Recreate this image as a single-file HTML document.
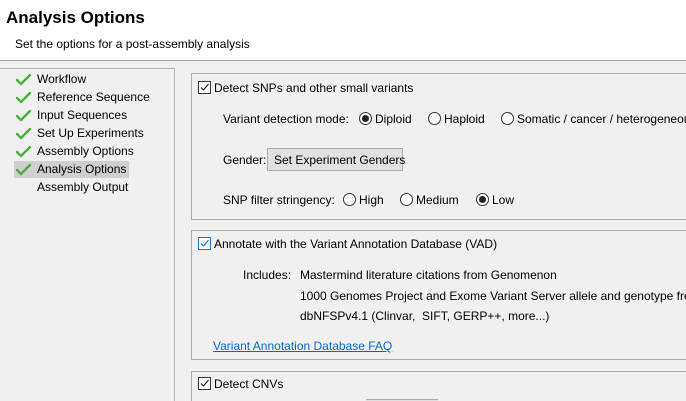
<!DOCTYPE html>
<html style="overflow:hidden"><head><style>
*{margin:0;padding:0;box-sizing:border-box}
html,body{width:686px;height:401px;overflow:hidden}
body{background:#f0f0f0;font-family:"Liberation Sans",sans-serif;font-size:12px;color:#000}
#w{position:relative;width:686px;height:401px;overflow:hidden}
.a{position:absolute;white-space:nowrap;line-height:14px}
.hdr{position:absolute;left:0;top:0;width:686px;height:61px;background:#fff;border-bottom:1px solid #a0a0a0}
.box{position:absolute;border:1px solid #a9a9a9}
.cb{position:absolute;width:13px;height:13px;border:1px solid #333;background:#fff}
.cb svg{position:absolute;left:0px;top:0px}
.rd{position:absolute;width:13px;height:13px;border:1px solid #333;border-radius:50%;background:#fff}
.rd.on::after{content:"";position:absolute;left:2px;top:2px;width:7px;height:7px;border-radius:50%;background:#222}
.chk{position:absolute;left:15px}
</style></head><body><div id="w">
<div class="hdr"></div>
<div class="a" style="left:6px;top:8px;font-size:17px;font-weight:bold;line-height:20px">Analysis Options</div>
<div class="a" style="left:15px;top:37px">Set the options for a post-assembly analysis</div>

<div style="position:absolute;left:0;top:68px;width:175px;height:333px;border-top:1px solid #b4b4b4;border-right:1px solid #b4b4b4"></div>
<div style="position:absolute;left:14px;top:161px;width:115px;height:17px;background:#cfcfcf"></div>
<svg class="chk" style="top:72px" width="18" height="130" viewBox="0 0 18 130">
<g fill="none" stroke="#4caf3c" stroke-width="2.4" stroke-linecap="round" stroke-linejoin="round">
<path d="M2 8 L6 12 L15 3"/><path d="M2 26 L6 30 L15 21"/><path d="M2 44 L6 48 L15 39"/><path d="M2 62 L6 66 L15 57"/><path d="M2 80 L6 84 L15 75"/><path d="M2 98 L6 102 L15 93"/></g></svg>
<div class="a" style="left:37px;top:72px">Workflow</div>
<div class="a" style="left:37px;top:90px">Reference Sequence</div>
<div class="a" style="left:37px;top:108px">Input Sequences</div>
<div class="a" style="left:37px;top:126px">Set Up Experiments</div>
<div class="a" style="left:37px;top:144px">Assembly Options</div>
<div class="a" style="left:37px;top:162px">Analysis Options</div>
<div class="a" style="left:37px;top:180px">Assembly Output</div>

<div style="position:absolute;left:191px;top:73px;width:495px;height:147px;border:1px solid #a9a9a9;border-right:none"></div>
<div class="cb" style="left:198px;top:81px"><svg width="11" height="11"><path d="M2 5.5 L4.5 8 L9.5 2" fill="none" stroke="#222" stroke-width="1.2"/></svg></div>
<div class="a" style="left:214px;top:81px">Detect SNPs and other small variants</div>
<div class="a" style="left:223px;top:112px">Variant detection mode:</div>
<div class="rd on" style="left:359px;top:112px"></div><div class="a" style="left:375px;top:112px">Diploid</div>
<div class="rd" style="left:428px;top:112px"></div><div class="a" style="left:444px;top:112px">Haploid</div>
<div class="rd" style="left:501px;top:112px"></div><div class="a" style="left:517px;top:112px;width:169px;overflow:hidden">Somatic / cancer / heterogeneous</div>
<div class="a" style="left:223px;top:153px">Gender:</div>
<div style="position:absolute;left:267px;top:148px;width:136px;height:23px;background:#e1e1e1;border:1px solid #adadad"></div>
<div class="a" style="left:274px;top:153px">Set Experiment Genders</div>
<div class="a" style="left:223px;top:193px">SNP filter stringency:</div>
<div class="rd" style="left:343px;top:193px"></div><div class="a" style="left:359px;top:193px">High</div>
<div class="rd" style="left:400px;top:193px"></div><div class="a" style="left:416px;top:193px">Medium</div>
<div class="rd on" style="left:476px;top:193px"></div><div class="a" style="left:492px;top:193px">Low</div>

<div style="position:absolute;left:191px;top:230px;width:495px;height:130px;border:1px solid #a9a9a9;border-right:none"></div>
<div class="cb" style="left:198px;top:237px;border-color:#1e6fd0"><svg width="11" height="11"><path d="M2 5.5 L4.5 8 L9.5 2" fill="none" stroke="#1e6fd0" stroke-width="1.2"/></svg></div>
<div class="a" style="left:214px;top:237px">Annotate with the Variant Annotation Database (VAD)</div>
<div class="a" style="left:243px;top:268px">Includes:</div>
<div class="a" style="left:300px;top:268px">Mastermind literature citations from Genomenon</div>
<div class="a" style="left:300px;top:289px;width:386px;overflow:hidden">1000 Genomes Project and Exome Variant Server allele and genotype frequencies</div>
<div class="a" style="left:300px;top:309px">dbNFSPv4.1 (Clinvar,&nbsp; SIFT, GERP++, more...)</div>
<div class="a" style="left:213px;top:339px;color:#0a64c8;text-decoration:underline">Variant Annotation Database FAQ</div>

<div style="position:absolute;left:191px;top:371px;width:495px;height:30px;border-top:1px solid #a9a9a9;border-left:1px solid #a9a9a9"></div>
<div class="cb" style="left:198px;top:377px"><svg width="11" height="11"><path d="M2 5.5 L4.5 8 L9.5 2" fill="none" stroke="#222" stroke-width="1.2"/></svg></div>
<div class="a" style="left:214px;top:377px">Detect CNVs</div>
<div style="position:absolute;left:366px;top:399px;width:72px;height:2px;border-top:1px solid #adadad;background:#e1e1e1"></div>
</div></body></html>
